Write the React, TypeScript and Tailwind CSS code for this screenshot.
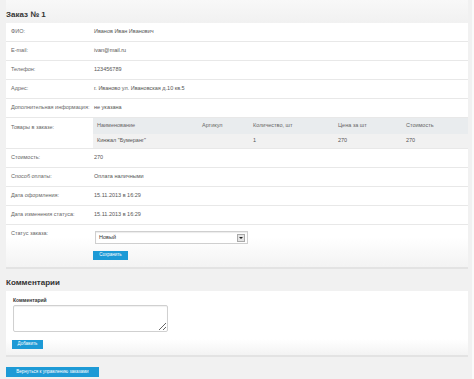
import React from "react";

const rows: [string, string][] = [
  ["ФИО:", "Иванов Иван Иванович"],
  ["E-mail:", "ivan@mail.ru"],
  ["Телефон:", "123456789"],
  ["Адрес:", "г. Иваново ул. Ивановская д.10 кв.5"],
  ["Дополнительная информация:", "не указана"],
];

const rows2: [string, string][] = [
  ["Стоимость:", "270"],
  ["Способ оплаты:", "Оплата наличными"],
  ["Дата оформления:", "15.11.2013 в 16:29"],
  ["Дата изменения статуса:", "15.11.2013 в 16:29"],
];

function Row({ label, value }: { label: string; value: string }) {
  return (
    <div className="flex h-[19px] items-center border-b border-[#e8e8e8]">
      <div className="w-[88px] pl-[5px] whitespace-nowrap text-[#666]">{label}</div>
      <div className="whitespace-nowrap text-[#555]">{value}</div>
    </div>
  );
}

export default function App() {
  return (
    <div className="flex w-[474px] h-[379px] overflow-hidden bg-[#f1f1f1] font-['Liberation_Sans',Arial,sans-serif] text-[5.5px] leading-none">
      <div className="w-[472px] pl-[6px] pr-[4px]">
        <div className="h-[23px] flex items-end pb-[4px] bg-[linear-gradient(to_bottom,#f8f8f8,#f1f1f1)]">
          <h1 className="text-[8px] font-bold text-[#333]">Заказ № 1</h1>
        </div>
        <div className="bg-[linear-gradient(to_bottom,#ffffff_88%,#f3f3f3)] border-b-2 border-[#e3e3e3]">
          {rows.map(([l, v]) => (
            <Row key={l} label={l} value={v} />
          ))}
          <div className="flex border-b border-[#e8e8e8]">
            <div className="w-[87px] pl-[5px] pt-[7px] whitespace-nowrap text-[#666]">Товары в заказе:</div>
            <div className="flex-1">
              <div className="flex h-[16px] items-center bg-[#e9ecee] text-[#666] whitespace-nowrap">
                <div className="w-[105px] pl-[4px]">Наименование</div>
                <div className="w-[51px] pl-[4px]">Артикул</div>
                <div className="w-[85px] pl-[4px]">Количество, шт</div>
                <div className="w-[68px] pl-[4px]">Цена за шт</div>
                <div className="flex-1 pl-[4px]">Стоимость</div>
              </div>
              <div className="flex h-[14px] items-center bg-[#f1f1f1] text-[#555] whitespace-nowrap">
                <div className="w-[105px] pl-[4px]">Кинжал "Бумеранг"</div>
                <div className="w-[51px] pl-[4px]"></div>
                <div className="w-[85px] pl-[4px]">1</div>
                <div className="w-[68px] pl-[4px]">270</div>
                <div className="flex-1 pl-[4px]">270</div>
              </div>
            </div>
          </div>
          {rows2.map(([l, v]) => (
            <Row key={l} label={l} value={v} />
          ))}
          <div className="flex h-[42px]">
            <div className="w-[87px] pl-[5px] pt-[6px] text-[#666]">Статус заказа:</div>
            <div className="flex flex-col pt-[6px]">
              <div className="ml-[2px] flex h-[13px] w-[153px] items-center justify-between border border-[#cfcfcf] bg-white pl-[3px] pr-[2px] shadow-[inset_0_1px_1px_rgba(0,0,0,0.08)] text-[#333]">
                <span>Новый</span>
                <span className="flex h-[8px] w-[8px] items-center justify-center border border-[#aaa] bg-[#e4e4e4]">
                  <span className="h-0 w-0 border-l-[2px] border-r-[2px] border-t-[2px] border-l-transparent border-r-transparent border-t-[#222]" />
                </span>
              </div>
              <div className="mt-[7px] flex h-[9px] w-[35px] items-center justify-center bg-[#1d9ad6] text-[4.5px] text-white">
                Сохранить
              </div>
            </div>
          </div>
        </div>
        <div className="h-[22px] flex items-end pb-[4px]">
          <h2 className="text-[8px] font-bold text-[#333]">Комментарии</h2>
        </div>
        <div className="h-[66px] bg-[linear-gradient(to_bottom,#ffffff_75%,#f3f3f3)] border-b-2 border-[#e3e3e3] pl-[7px] pt-[7px]">
          <div className="text-[5px] font-bold text-[#333]">Комментарий</div>
          <textarea className="mt-[2px] block h-[27px] w-[155px] rounded-[2px] border border-[#d0d0d0] bg-white shadow-[inset_0_1px_1px_rgba(0,0,0,0.06)] outline-none" />
          <div className="mt-[8px] -ml-[1px] flex h-[9px] w-[31px] items-center justify-center bg-[#1d9ad6] text-[4.5px] text-white">
            Добавить
          </div>
        </div>
        <div className="mt-[10px] flex h-[10px] w-[93px] items-center justify-center bg-[#1d9ad6] text-[4.5px] text-white whitespace-nowrap">
          Вернуться к управлению заказами
        </div>
      </div>
      <div className="w-[2px] bg-[#fafafa]" />
    </div>
  );
}
